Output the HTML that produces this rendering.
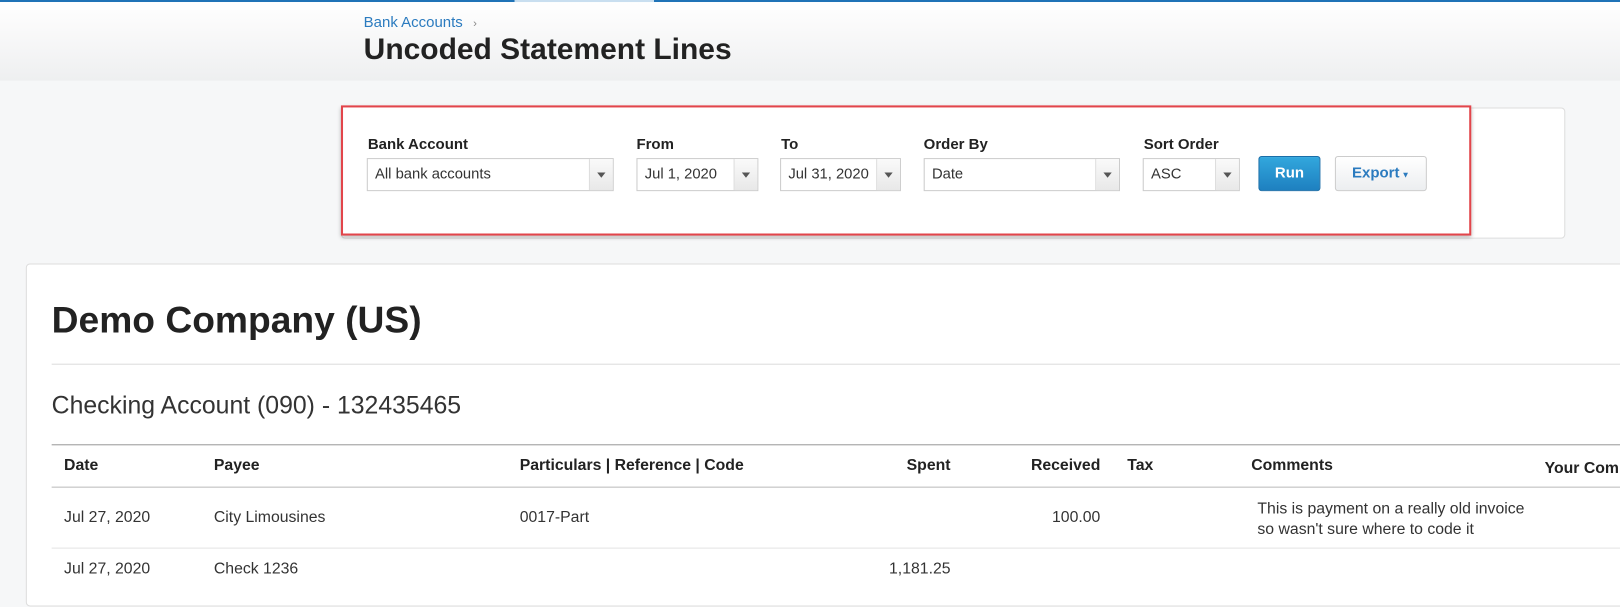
<!DOCTYPE html><html><head><style>
body{margin:0;width:1620px;height:582px;overflow:hidden;background:#f6f7f8;font-family:"Liberation Sans",Arial,sans-serif;color:#333;position:relative}
#w{position:absolute;left:0;top:0;width:1568px;height:564px;transform:scale(1.0332);transform-origin:0 0}
.a{position:absolute}
.top{left:0;top:0;width:1568px;height:2px;background:#1f73b7}
.hdr{left:0;top:2px;width:1568px;height:76px;background:linear-gradient(#fff,#eeeff0)}
.lbl{font-size:14.5px;font-weight:bold;color:#222}
.sel{height:32px;border:1px solid #ccc;background:#fff;box-sizing:border-box;font-size:14.3px;line-height:30px;padding-left:7px}
.sel b{position:absolute;right:0;top:0;width:22px;height:30px;border-left:1px solid #ddd;background:linear-gradient(#fafafa,#e8e8e8)}
.sel b:after{content:"";position:absolute;left:7px;top:13px;border:4px solid transparent;border-top:5px solid #555}
.th{font-size:15.3px;font-weight:bold;color:#222}
.td{font-size:15.3px;color:#333}
</style></head><body><div id="w">
<div class="a top"></div><div class="a" style="left:498px;top:0;width:135px;height:2px;background:#c9dff0"></div>
<div class="a hdr"></div>
<div class="a" style="left:352px;top:14px;font-size:14.5px;color:#2b7bbf">Bank Accounts <span style="color:#888;font-size:11px;margin-left:6px">›</span></div>
<div class="a" style="left:352px;top:32px;font-size:29px;font-weight:bold;color:#222">Uncoded Statement Lines</div>
<div class="a" style="left:330px;top:104px;width:1183px;height:125px;background:#fff;border:1px solid #ddd;border-radius:4px"></div>
<div class="a" style="left:330px;top:102px;width:1090px;height:122px;border:2px solid #e2454b;box-shadow:0 2px 4px rgba(0,0,0,.3);background:#fff"></div>
<div class="a lbl" style="left:356px;top:132px">Bank Account</div>
<div class="a sel" style="left:355px;top:153px;width:239px">All bank accounts<b></b></div>
<div class="a lbl" style="left:616px;top:132px">From</div>
<div class="a sel" style="left:616px;top:153px;width:118px">Jul 1, 2020<b></b></div>
<div class="a lbl" style="left:756px;top:132px">To</div>
<div class="a sel" style="left:755px;top:153px;width:117px">Jul 31, 2020<b></b></div>
<div class="a lbl" style="left:894px;top:132px">Order By</div>
<div class="a sel" style="left:894px;top:153px;width:190px">Date<b></b></div>
<div class="a lbl" style="left:1107px;top:132px">Sort Order</div>
<div class="a sel" style="left:1106px;top:153px;width:94px">ASC<b></b></div>
<div class="a" style="left:1218px;top:151px;width:60px;height:34px;box-sizing:border-box;border:1px solid #1a6ea8;border-radius:3px;background:linear-gradient(#32a7dd,#1e80c0);color:#fff;font-weight:bold;font-size:14.5px;text-align:center;line-height:32px">Run</div>
<div class="a" style="left:1292px;top:151px;width:89px;height:34px;box-sizing:border-box;border:1px solid #ccc;border-radius:3px;background:linear-gradient(#fff,#eceef0);color:#2b7bbf;font-weight:bold;font-size:14.5px;text-align:center;line-height:32px">Export<span style="font-size:8px;margin-left:2px">▼</span></div>
<div class="a" style="left:25px;top:255px;width:1600px;height:330px;background:#fff;border:1px solid #ddd;border-radius:4px"></div>
<div class="a" style="left:50px;top:289px;font-size:36px;font-weight:bold;color:#222">Demo Company (US)</div>
<div class="a" style="left:50px;top:352px;width:1570px;height:1px;background:#ddd"></div>
<div class="a" style="left:50px;top:379px;font-size:24px;color:#333">Checking Account (090) - 132435465</div>
<div class="a" style="left:50px;top:430px;width:1570px;height:1px;background:#999"></div>
<div class="a" style="left:50px;top:471px;width:1570px;height:1px;background:#bbb"></div>
<div class="a" style="left:50px;top:530px;width:1570px;height:1px;background:#e3e3e3"></div>
<div class="a th" style="left:62px;top:442px">Date</div>
<div class="a th" style="left:207px;top:442px">Payee</div>
<div class="a th" style="left:503px;top:442px">Particulars | Reference | Code</div>
<div class="a th" style="left:820px;width:100px;text-align:right;top:442px">Spent</div>
<div class="a th" style="left:965px;width:100px;text-align:right;top:442px">Received</div>
<div class="a th" style="left:1091px;top:442px">Tax</div>
<div class="a th" style="left:1211px;top:442px">Comments</div>
<div class="a th" style="left:1495px;top:445px;white-space:nowrap">Your Comments</div>
<div class="a td" style="left:62px;top:492px">Jul 27, 2020</div>
<div class="a td" style="left:207px;top:492px">City Limousines</div>
<div class="a td" style="left:503px;top:492px">0017-Part</div>
<div class="a td" style="left:965px;width:100px;text-align:right;top:492px">100.00</div>
<div class="a td" style="left:1217px;top:483px;line-height:20px">This is payment on a really old invoice<br>so wasn't sure where to code it</div>
<div class="a td" style="left:62px;top:542px">Jul 27, 2020</div>
<div class="a td" style="left:207px;top:542px">Check 1236</div>
<div class="a td" style="left:820px;width:100px;text-align:right;top:542px">1,181.25</div>
</div></body></html>
